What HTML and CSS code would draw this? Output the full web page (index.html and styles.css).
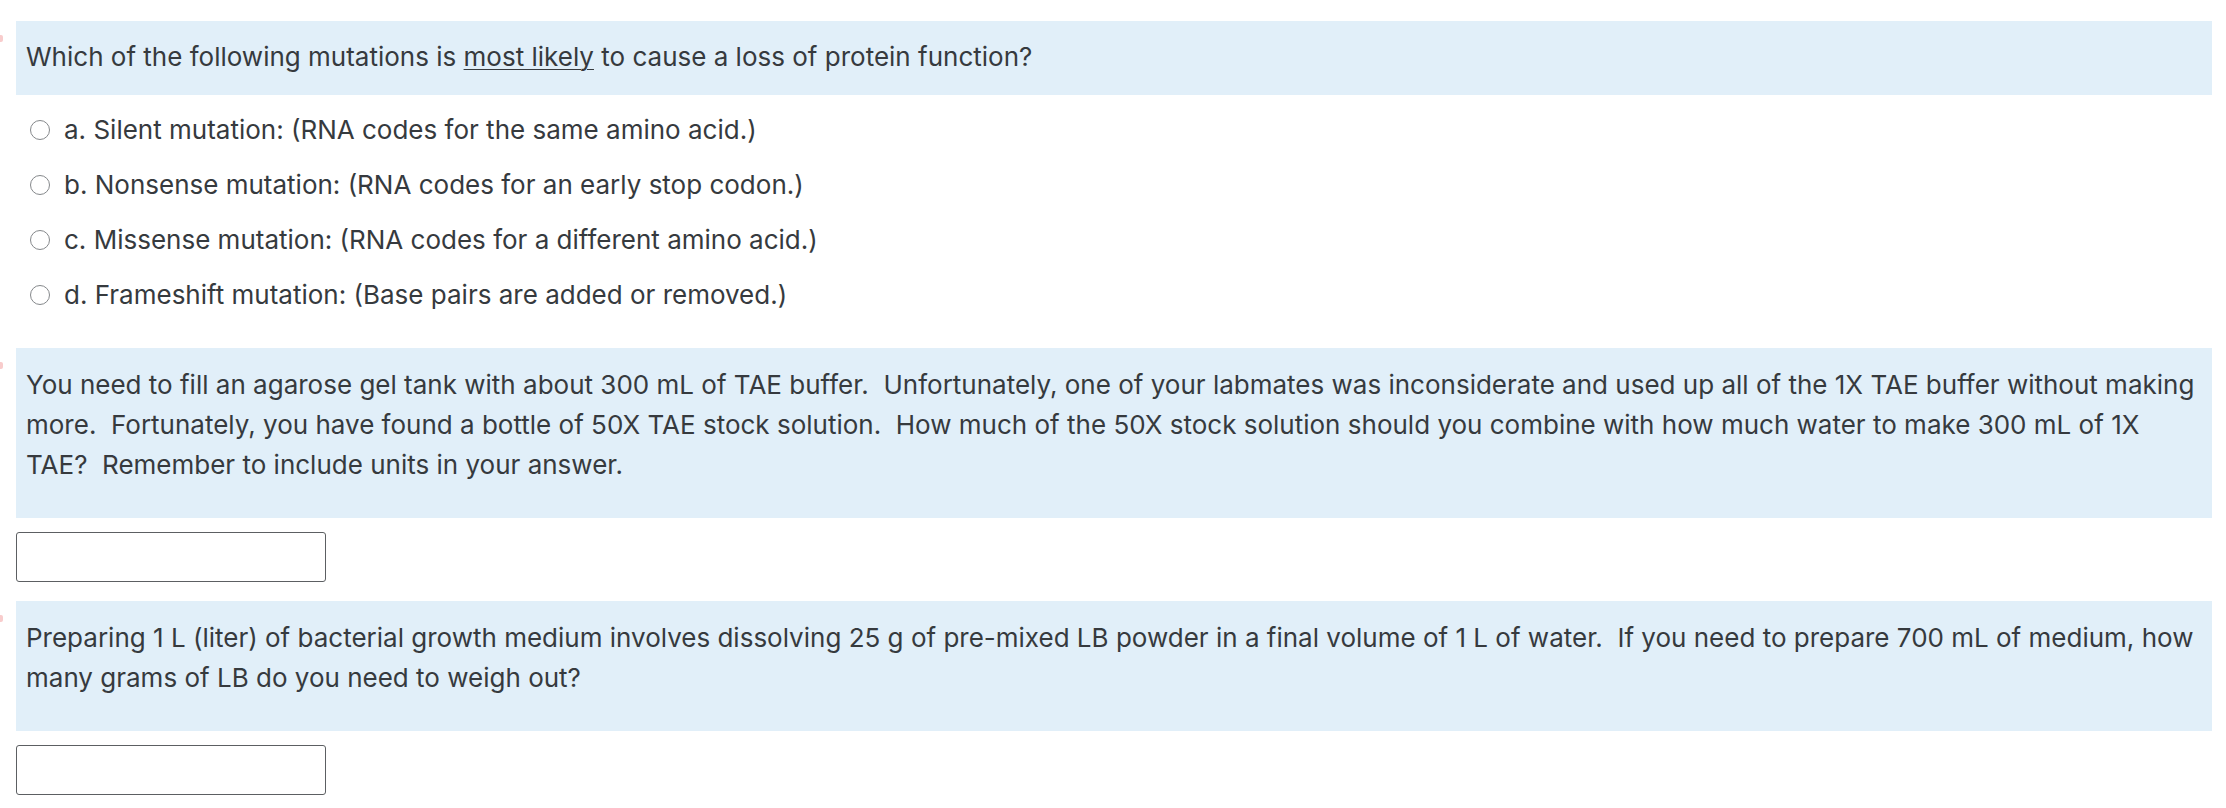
FILE: index.html
```html
<!DOCTYPE html>
<html>
<head>
<meta charset="utf-8">
<link rel="stylesheet" href="styles.css">
</head>
<body>
<div class="page">
  <section class="q q-mc">
    <div class="mark"></div>
    <div class="qtext qtext-single">Which of the following mutations is <u>most likely</u> to cause a loss of protein function?</div>
    <ul class="options">
      <li class="opt"><span class="radio"></span><span>a. Silent mutation: (RNA codes for the same amino acid.)</span></li>
      <li class="opt"><span class="radio"></span><span>b. Nonsense mutation: (RNA codes for an early stop codon.)</span></li>
      <li class="opt"><span class="radio"></span><span>c. Missense mutation: (RNA codes for a different amino acid.)</span></li>
      <li class="opt"><span class="radio"></span><span>d. Frameshift mutation: (Base pairs are added or removed.)</span></li>
    </ul>
  </section>

  <section class="q q-short">
    <div class="mark"></div>
    <div class="qtext qtext-multi">You need to fill an agarose gel tank with about 300 mL of TAE buffer.&nbsp; Unfortunately, one of your labmates was inconsiderate and used up all of the 1X TAE buffer without making<br>more.&nbsp; Fortunately, you have found a bottle of 50X TAE stock solution.&nbsp; How much of the 50X stock solution should you combine with how much water to make 300 mL of 1X<br>TAE?&nbsp; Remember to include units in your answer.</div>
    <input class="answer" type="text">
  </section>

  <section class="q q-short q-last">
    <div class="mark"></div>
    <div class="qtext qtext-multi">Preparing 1 L (liter) of bacterial growth medium involves dissolving 25 g of pre-mixed LB powder in a final volume of 1 L of water.&nbsp; If you need to prepare 700 mL of medium, how<br>many grams of LB do you need to weigh out?</div>
    <input class="answer" type="text">
  </section>
</div>
</body>
</html>
```

FILE: styles.css
```css
html, body {
  margin: 0;
  padding: 0;
  background: #ffffff;
}

body {
  font-family: Inter, "Noto Sans", "Liberation Sans", sans-serif;
  font-size: 26px;
  color: #363a3e;
}

.page {
  padding: 21px 14px 0 16px;
  display: flex;
  flex-direction: column;
}

.q {
  position: relative;
  display: flex;
  flex-direction: column;
}

.mark {
  position: absolute;
  left: -16px;
  top: 14px;
  width: 3px;
  height: 7px;
  background: #f8cccc;
  border-radius: 0 2px 2px 0;
}

.qtext {
  background: #e1eff9;
  padding: 16px 4px 18px 10px;
  line-height: 40px;
}

.qtext-multi {
  padding: 17px 4px 33px 10px;
  white-space: nowrap;
  overflow: hidden;
}

.qtext u {
  text-decoration-thickness: 1px;
  text-underline-offset: 3px;
}

.options {
  list-style: none;
  margin: 7px 0 0 0;
  padding: 0;
  display: flex;
  flex-direction: column;
}

.opt {
  height: 55px;
  display: flex;
  align-items: center;
  gap: 14px;
  padding-left: 14px;
}

.radio {
  width: 20px;
  height: 20px;
  box-sizing: border-box;
  border: 1.5px solid #85888b;
  border-radius: 50%;
  flex: none;
}

.q-mc {
  margin-bottom: 26px;
}

.answer {
  margin-top: 14px;
  width: 310px;
  height: 50px;
  box-sizing: border-box;
  border: 1px solid #5c5f62;
  border-radius: 3px;
  background: #fff;
  padding: 0 10px;
  font: inherit;
}

.q-short {
  margin-bottom: 19px;
}

.q-last {
  margin-bottom: 0;
}
```
